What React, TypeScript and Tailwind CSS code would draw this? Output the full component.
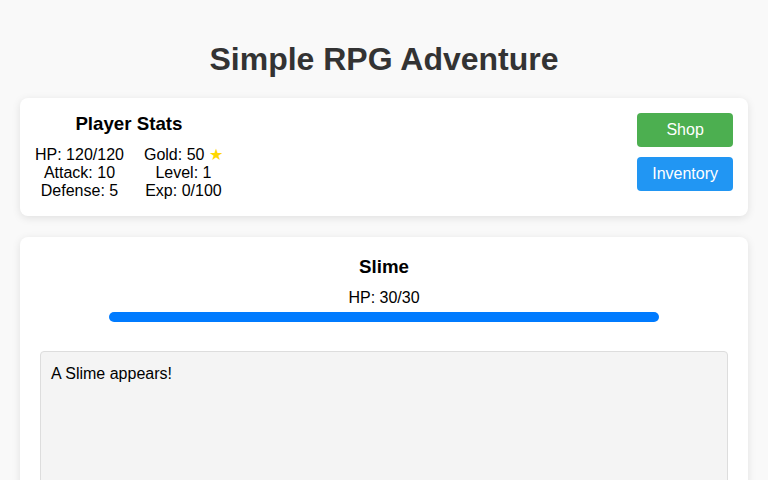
export default function App() {
  return (
    <div className="min-h-screen bg-[#f9f9f9] px-5 pt-5 font-['Liberation_Sans',Arial,sans-serif] text-black">
      <h1 className="mt-[21px] mb-[20px] text-center text-[32px] font-bold leading-[37px] text-[#333]">
        Simple RPG Adventure
      </h1>

      {/* Player card */}
      <div className="flex items-start justify-between rounded-lg bg-white px-[15px] pt-[15px] pb-[16px] shadow-[0_2px_8px_rgba(0,0,0,0.1)]">
        <div className="text-center">
          <h3 className="mb-[11px] text-[18.72px] font-bold leading-[22px]">Player Stats</h3>
          <div className="flex gap-5 text-base leading-[18px]">
            <div>
              <div>HP: 120/120</div>
              <div>Attack: 10</div>
              <div>Defense: 5</div>
            </div>
            <div>
              <div>
                Gold: 50 <span className="text-[#ffd700]">★</span>
              </div>
              <div>Level: 1</div>
              <div>Exp: 0/100</div>
            </div>
          </div>
        </div>
        <div className="flex flex-col gap-[10px]">
          <button className="rounded bg-[#4caf50] px-[15px] py-2 text-base leading-[18px] text-white">
            Shop
          </button>
          <button className="rounded bg-[#2196f3] px-[15px] py-2 text-base leading-[18px] text-white">
            Inventory
          </button>
        </div>
      </div>

      {/* Battle card */}
      <div className="mt-[21px] rounded-lg bg-white px-5 pt-[19px] pb-5 shadow-[0_2px_8px_rgba(0,0,0,0.1)]">
        <div className="text-center">
          <h3 className="text-[18.72px] font-bold leading-[22px]">Slime</h3>
          <div className="mt-[11px] text-base leading-[18px]">HP: 30/30</div>
          <div className="mx-auto mt-[5px] h-[10px] w-4/5 rounded-full bg-[#007bff]" />
        </div>
        <div className="mt-[29px] h-[200px] overflow-y-auto rounded border border-[#ddd] bg-[#f4f4f4] px-[10px] pt-[11px] pb-[10px] text-base leading-[22px]">
          <p>A Slime appears!</p>
        </div>
      </div>
    </div>
  );
}
